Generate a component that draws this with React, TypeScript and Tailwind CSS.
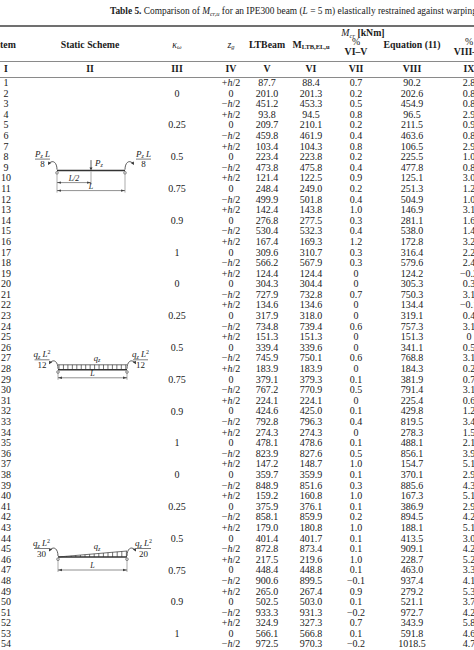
import React from "react";

type Row = [string, string, string, string, string];

// columns V..IX for items 1..54
const data: Row[] = [
  ["87.7", "88.4", "0.7", "90.2", "2.8"],
  ["201.0", "201.3", "0.2", "202.6", "0.8"],
  ["451.2", "453.3", "0.5", "454.9", "0.8"],
  ["93.8", "94.5", "0.8", "96.5", "2.9"],
  ["209.7", "210.1", "0.2", "211.5", "0.9"],
  ["459.8", "461.9", "0.4", "463.6", "0.8"],
  ["103.4", "104.3", "0.8", "106.5", "2.9"],
  ["223.4", "223.8", "0.2", "225.5", "1.0"],
  ["473.8", "475.8", "0.4", "477.8", "0.8"],
  ["121.4", "122.5", "0.9", "125.1", "3.0"],
  ["248.4", "249.0", "0.2", "251.3", "1.2"],
  ["499.9", "501.8", "0.4", "504.9", "1.0"],
  ["142.4", "143.8", "1.0", "146.9", "3.1"],
  ["276.8", "277.5", "0.3", "281.1", "1.6"],
  ["530.4", "532.3", "0.4", "538.0", "1.4"],
  ["167.4", "169.3", "1.2", "172.8", "3.2"],
  ["309.6", "310.7", "0.3", "316.4", "2.2"],
  ["566.2", "567.9", "0.3", "579.6", "2.4"],
  ["124.4", "124.4", "0", "124.2", "−0.2"],
  ["304.3", "304.4", "0", "305.3", "0.3"],
  ["727.9", "732.8", "0.7", "750.3", "3.1"],
  ["134.6", "134.6", "0", "134.4", "−0.1"],
  ["317.9", "318.0", "0", "319.1", "0.4"],
  ["734.8", "739.4", "0.6", "757.3", "3.1"],
  ["151.3", "151.3", "0", "151.3", "0"],
  ["339.4", "339.6", "0", "341.1", "0.5"],
  ["745.9", "750.1", "0.6", "768.8", "3.1"],
  ["183.9", "183.9", "0", "184.3", "0.2"],
  ["379.1", "379.3", "0.1", "381.9", "0.7"],
  ["767.2", "770.9", "0.5", "791.4", "3.1"],
  ["224.1", "224.1", "0", "225.4", "0.6"],
  ["424.6", "425.0", "0.1", "429.8", "1.2"],
  ["792.8", "796.3", "0.4", "819.5", "3.4"],
  ["274.3", "274.3", "0", "278.3", "1.5"],
  ["478.1", "478.6", "0.1", "488.1", "2.1"],
  ["823.9", "827.6", "0.5", "856.1", "3.9"],
  ["147.2", "148.7", "1.0", "154.7", "5.1"],
  ["359.7", "359.9", "0.1", "370.1", "2.9"],
  ["848.9", "851.6", "0.3", "885.6", "4.3"],
  ["159.2", "160.8", "1.0", "167.3", "5.1"],
  ["375.9", "376.1", "0.1", "386.9", "2.9"],
  ["858.1", "859.9", "0.2", "894.5", "4.2"],
  ["179.0", "180.8", "1.0", "188.1", "5.1"],
  ["401.4", "401.7", "0.1", "413.5", "3.0"],
  ["872.8", "873.4", "0.1", "909.1", "4.2"],
  ["217.5", "219.6", "1.0", "228.7", "5.2"],
  ["448.4", "448.8", "0.1", "463.0", "3.3"],
  ["900.6", "899.5", "−0.1", "937.4", "4.1"],
  ["265.0", "267.4", "0.9", "279.2", "5.3"],
  ["502.5", "503.0", "0.1", "521.1", "3.7"],
  ["933.3", "931.3", "−0.2", "972.7", "4.2"],
  ["324.9", "327.3", "0.7", "343.9", "5.8"],
  ["566.1", "566.8", "0.1", "591.8", "4.6"],
  ["972.5", "970.3", "−0.2", "1018.5", "4.7"],
];

const kappas = ["0", "0.25", "0.5", "0.75", "0.9", "1"];
const dataCols = ["w-[42px]", "w-[46px]", "w-[44px]", "w-[68px]", "w-[46px]"];
const cell = "flex h-[10.6px] shrink-0 items-center justify-center whitespace-nowrap";
const serif = { fontFamily: "'Liberation Serif', 'Times New Roman', serif" } as const;

function Zg({ i }: { i: number }) {
  const k = i % 3;
  if (k === 1) return <>0</>;
  return (
    <>
      {k === 0 ? "+" : "−"}
      <i>h</i>/2
    </>
  );
}

// little helpers for the beam drawings
const ink = "#222";
const font = "'Liberation Serif', serif";

function Frac({ x, y, num, den, sq }: { x: number; y: number; num: "P" | "q"; den: string; sq?: boolean }) {
  return (
    <g fill={ink} fontFamily={font} fontSize="9">
      <text x={x} y={y} textAnchor="middle" fontStyle="italic">
        {num}
        <tspan fontSize="6" dy="1.5">z</tspan>
        <tspan dy="-1.5"> L</tspan>
        {sq && (
          <tspan fontSize="6" fontStyle="normal" dy="-3.5">
            2
          </tspan>
        )}
      </text>
      <line x1={x - 7.5} x2={x + 7.5} y1={y + 2.5} y2={y + 2.5} stroke={ink} strokeWidth="0.6" />
      <text x={x} y={y + 10.5} textAnchor="middle">
        {den}
      </text>
    </g>
  );
}

function Moments({ y, x1, x2 }: { y: number; x1: number; x2: number }) {
  return (
    <g stroke="#333" strokeWidth="0.8" fill="none">
      <path d={`M${x1},${y - 1} C${x1},${y - 8} ${x1 - 4},${y - 11} ${x1 - 7.5},${y - 7.5}`} />
      <path d={`M${x2},${y - 1} C${x2},${y - 8} ${x2 + 4},${y - 11} ${x2 + 7.5},${y - 7.5}`} />
      <polygon points={`${x1 - 9},${y - 5.5} ${x1 - 8.8},${y - 9} ${x1 - 5.8},${y - 7.6}`} fill="#333" stroke="none" />
      <polygon points={`${x2 + 9},${y - 5.5} ${x2 + 8.8},${y - 9} ${x2 + 5.8},${y - 7.6}`} fill="#333" stroke="none" />
    </g>
  );
}

function Supports({ y, x1, x2 }: { y: number; x1: number; x2: number }) {
  return (
    <g stroke="#666" strokeWidth="0.6" fill="#ccc">
      <circle cx={x1} cy={y + 2.2} r="1.4" />
      <circle cx={x2} cy={y + 2.2} r="1.4" />
    </g>
  );
}

function Dim({ y, x1, x2, label, ly }: { y: number; x1: number; x2: number; label: string; ly: number }) {
  return (
    <g>
      <line x1={x1} x2={x2} y1={y} y2={y} stroke="#444" strokeWidth="0.6" />
      <polygon points={`${x1},${y} ${x1 + 4},${y - 1.2} ${x1 + 4},${y + 1.2}`} fill="#444" />
      <polygon points={`${x2},${y} ${x2 - 4},${y - 1.2} ${x2 - 4},${y + 1.2}`} fill="#444" />
      <text x={(x1 + x2) / 2} y={ly} textAnchor="middle" fontStyle="italic" fontSize="8" fill={ink} fontFamily={font}>
        {label}
      </text>
    </g>
  );
}

function SchemeBox({ cy, children }: { cy: number; children: React.ReactNode }) {
  return (
    <svg width="128" height="80" viewBox={`26 ${cy - 40} 128 80`} className="shrink-0">
      {children}
    </svg>
  );
}

function SchemePoint() {
  const y = 171;
  return (
    <SchemeBox cy={173.4}>
      <Frac x={42.5} y={157} num="P" den="8" />
      <Frac x={143.5} y={157} num="P" den="8" />
      <Moments y={y} x1={57} x2={125} />
      <line x1={57} x2={125} y1={y} y2={y} stroke="#333" strokeWidth="1.5" />
      <Supports y={y} x1={57} x2={125} />
      <line x1={91} x2={91} y1={160.5} y2={168.5} stroke="#333" strokeWidth="0.8" />
      <polygon points="89.5,168 92.5,168 91,171" fill="#333" />
      <text x={95} y={166} fontStyle="italic" fontSize="9" fill={ink} fontFamily={font}>
        P<tspan fontSize="6" dy="1.5">z</tspan>
      </text>
      <g stroke="#555" strokeWidth="0.5">
        <line x1={57} x2={57} y1={174.5} y2={193} />
        <line x1={91} x2={91} y1={172} y2={185} />
        <line x1={125} x2={125} y1={174.5} y2={193} />
      </g>
      <Dim y={183} x1={57} x2={91} label="L/2" ly={181.3} />
      <Dim y={191} x1={57} x2={125} label="L" ly={189.3} />
    </SchemeBox>
  );
}

function SchemeUniform() {
  const y = 370;
  const ticks = Array.from({ length: 16 }, (_, i) => 59 + i * 4.45);
  return (
    <SchemeBox cy={364.2}>
      <Frac x={42} y={357.5} num="q" den="12" sq />
      <Frac x={140.5} y={357.5} num="q" den="12" sq />
      <Moments y={y} x1={58} x2={127} />
      <g stroke="#333" strokeWidth="0.7">
        <line x1={58} x2={127} y1={365} y2={365} />
        {ticks.map((t) => (
          <line key={t} x1={t} x2={t} y1={365} y2={y} />
        ))}
      </g>
      <line x1={58} x2={127} y1={y} y2={y} stroke="#333" strokeWidth="1.4" />
      <Supports y={y} x1={58} x2={127} />
      <text x={97} y={361} fontStyle="italic" fontSize="8.5" fill={ink} textAnchor="middle" fontFamily={font}>
        q<tspan fontSize="6" dy="1.5">z</tspan>
      </text>
      <g stroke="#555" strokeWidth="0.5">
        <line x1={58} x2={58} y1={373} y2={380} />
        <line x1={127} x2={127} y1={373} y2={380} />
      </g>
      <Dim y={378} x1={58} x2={127} label="L" ly={376.3} />
    </SchemeBox>
  );
}

function SchemeTriangle() {
  const y = 557;
  const ticks = Array.from({ length: 15 }, (_, i) => 62 + i * 4.6);
  const top = (x: number) => y - ((x - 58) / 69) * 6;
  return (
    <SchemeBox cy={555}>
      <Frac x={41.5} y={546} num="q" den="30" sq />
      <Frac x={143.5} y={546} num="q" den="20" sq />
      <Moments y={y} x1={58} x2={127} />
      <g stroke="#333" strokeWidth="0.7">
        <line x1={58} x2={127} y1={y} y2={top(127)} />
        {ticks.map((t) => (
          <line key={t} x1={t} x2={t} y1={top(t)} y2={y} />
        ))}
      </g>
      <line x1={58} x2={127} y1={y} y2={y} stroke="#333" strokeWidth="1.4" />
      <Supports y={y} x1={58} x2={127} />
      <text x={97} y={549} fontStyle="italic" fontSize="8.5" fill={ink} textAnchor="middle" fontFamily={font}>
        q<tspan fontSize="6" dy="1.5">z</tspan>
      </text>
      <g stroke="#555" strokeWidth="0.5">
        <line x1={58} x2={58} y1={560} y2={572} />
        <line x1={127} x2={127} y1={560} y2={572} />
      </g>
      <Dim y={570} x1={58} x2={127} label="L" ly={568.3} />
    </SchemeBox>
  );
}

const headCol = "row-start-1 row-span-2 flex flex-col items-center justify-center whitespace-nowrap leading-[11px]";

export default function App() {
  return (
    <div className="h-[650px] w-[474px] overflow-hidden bg-white text-[#1a1a1a]" style={serif}>
      {/* caption */}
      <div className="whitespace-nowrap pb-[8px] pl-[110px] pt-[5px] text-[9.4px] leading-[12px]">
        <b>Table 5.</b> Comparison of <i>M</i>
        <sub className="text-[6.5px]">
          <i>cr,u</i>
        </sub>{" "}
        for an IPE300 beam (<i>L</i> = 5 m) elastically restrained against warping at both ends.
      </div>

      <div className="h-[2px] bg-[#707070]" />

      {/* header */}
      <div className="ml-[-30px] grid h-[34px] w-[522px] grid-cols-[72px_96px_78px_30px_42px_46px_44px_68px_46px] grid-rows-[13px_21px] text-[9.8px] font-bold">
        <div className="col-start-5 col-end-10 row-start-1 flex justify-center pr-[12px] pt-[1px] leading-[9px]">
          <span>
            <i className="font-normal">M</i>
            <sub className="text-[6.5px] font-normal">
              <i>cr</i>
            </sub>{" "}
            [kNm]
          </span>
        </div>
        <div className={`col-start-1 ${headCol}`}>Item</div>
        <div className={`col-start-2 ${headCol}`}>Static Scheme</div>
        <div className={`col-start-3 ${headCol} font-normal`}>
          <span>
            <i>κ</i>
            <sub className="text-[6.5px]">
              <i>ω</i>
            </sub>
          </span>
        </div>
        <div className={`col-start-4 ${headCol} font-normal`}>
          <span>
            <i>z</i>
            <sub className="text-[6.5px]">
              <i>g</i>
            </sub>
          </span>
        </div>
        <div className={`col-start-5 ${headCol}`}>LTBeam</div>
        <div className={`col-start-6 ${headCol}`}>
          <span>
            M<sub className="text-[6.5px]">LTB,EL,u</sub>
          </span>
        </div>
        <div className={`col-start-7 ${headCol} pt-[5px]`}>
          <span className="font-normal leading-[9px]">%</span>
          <span>VI–V</span>
        </div>
        <div className={`col-start-8 ${headCol}`}>Equation (11)</div>
        <div className={`col-start-9 ${headCol} pt-[5px]`}>
          <span className="font-normal leading-[9px]">%</span>
          <span>VIII–V</span>
        </div>
      </div>

      <div className="h-[1px] bg-[#8a8a8a]" />

      {/* roman numerals */}
      <div className="ml-[-30px] flex h-[15px] w-[522px] text-[9.8px] font-bold">
        {[
          ["w-[72px]", "I"],
          ["w-[96px]", "II"],
          ["w-[78px]", "III"],
          ["w-[30px]", "IV"],
          ["w-[42px]", "V"],
          ["w-[46px]", "VI"],
          ["w-[44px]", "VII"],
          ["w-[68px]", "VIII"],
          ["w-[46px]", "IX"],
        ].map(([w, t]) => (
          <div key={t} className={`${w} flex shrink-0 items-center justify-center`}>
            {t}
          </div>
        ))}
      </div>

      <div className="h-[1px] bg-[#8a8a8a]" />

      {/* body */}
      <div className="ml-[-30px] flex w-[522px] text-[10px] leading-[10.6px]">
        <div className="flex w-[72px] shrink-0 flex-col">
          {data.map((_, i) => (
            <div key={i} className={cell}>
              {i + 1}
            </div>
          ))}
        </div>

        <div className="flex w-[96px] shrink-0 flex-col">
          <div className="flex h-[190.8px] items-center justify-center">
            <SchemePoint />
          </div>
          <div className="flex h-[190.8px] items-center justify-center">
            <SchemeUniform />
          </div>
          <div className="flex h-[190.8px] items-center justify-center">
            <SchemeTriangle />
          </div>
        </div>

        <div className="flex w-[78px] shrink-0 flex-col">
          {[0, 1, 2].flatMap((s) =>
            kappas.map((k) => (
              <div key={`${s}-${k}`} className="flex h-[31.8px] shrink-0 items-center justify-center">
                {k}
              </div>
            ))
          )}
        </div>

        <div className="flex w-[30px] shrink-0 flex-col">
          {data.map((_, i) => (
            <div key={i} className={cell}>
              <Zg i={i} />
            </div>
          ))}
        </div>

        {dataCols.map((w, c) => (
          <div key={`${w}-${c}`} className={`flex ${w} shrink-0 flex-col`}>
            {data.map((r, i) => (
              <div key={i} className={cell}>
                {r[c]}
              </div>
            ))}
          </div>
        ))}
      </div>
    </div>
  );
}
